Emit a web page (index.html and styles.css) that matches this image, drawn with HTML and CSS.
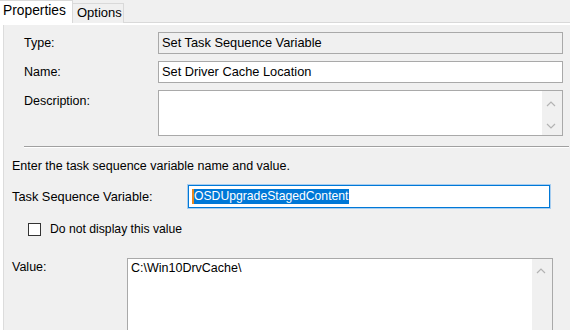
FILE: index.html
```html
<!DOCTYPE html>
<html>
<head>
<meta charset="utf-8">
<link rel="stylesheet" href="styles.css">
</head>
<body>
<div class="window">
  <div class="tabs">
    <div class="tab active">Properties</div>
    <div class="tab">Options</div>
  </div>
  <div class="page">
    <div class="content">
      <div class="top">
        <div class="row">
          <div class="label">Type:</div>
          <div class="box readonly">Set Task Sequence Variable</div>
        </div>
        <div class="row">
          <div class="label">Name:</div>
          <div class="box">Set Driver Cache Location</div>
        </div>
        <div class="row desc-row">
          <div class="label">Description:</div>
          <div class="box desc">
            <div class="text"></div>
            <div class="scroll">
              <svg width="10" height="6" viewBox="0 0 10 6"><polyline points="1,5 5,1 9,5" fill="none" stroke="#b3b3b3" stroke-width="1.2"/></svg>
              <svg width="10" height="6" viewBox="0 0 10 6"><polyline points="1,1 5,5 9,1" fill="none" stroke="#b3b3b3" stroke-width="1.2"/></svg>
            </div>
          </div>
        </div>
        <div class="sep"></div>
      </div>
      <div class="bottom">
        <div class="intro">Enter the task sequence variable name and value.</div>
        <div class="row tsv-row">
          <div class="label tsv-label">Task Sequence Variable:</div>
          <div class="box focus"><span class="caret"></span><span class="sel">OSDUpgradeStagedContent</span></div>
        </div>
        <div class="check-row">
          <span class="checkbox"></span>
          <span class="check-label">Do not display this value</span>
        </div>
        <div class="value-row">
          <div class="label value-label">Value:</div>
          <div class="box value">
            <div class="text">C:\Win10DrvCache\</div>
            <div class="scroll vscroll">
              <svg width="10" height="6" viewBox="0 0 10 6"><polyline points="1,5 5,1 9,5" fill="none" stroke="#b3b3b3" stroke-width="1.2"/></svg>
            </div>
          </div>
        </div>
      </div>
    </div>
  </div>
</div>
</body>
</html>
```

FILE: styles.css
```css
* { box-sizing: border-box; }
html, body {
  margin: 0;
  padding: 0;
  background: #f0f0f0;
}
body {
  font-family: "Liberation Sans", Arial, sans-serif;
  font-size: 12.5px;
  color: #000;
}
.window {
  width: 570px;
  height: 330px;
  overflow: hidden;
  position: relative;
}
.tabs {
  display: flex;
  align-items: flex-end;
  height: 23px;
  background: #f0f0f0;
}
.tab {
  height: 20px;
  padding: 0 4px;
  line-height: 18px;
  border: 1px solid #d9d9d9;
  border-bottom: none;
  background: #f0f0f0;
  font-size: 13px;
}
.tab.active {
  height: 23px;
  width: 73px;
  background: #fff;
  line-height: 20px;
  padding: 0 3px;
  border-left: none;
  position: relative;
  z-index: 1;
  font-size: 13.8px;
}
.tab:not(.active) {
  width: 51px;
  border-left: none;
}
.page {
  background: #fff;
  border-top: 1px solid #d9d9d9;
  margin-top: -1px;
  padding: 2px 0 0 3px;
  height: 308px;
}
.content {
  background: #f0f0f0;
  border-left: 1px solid #dcdcdc;
  height: 100%;
  width: 600px;
}
.top {
  padding: 7px 0 0 20px;
}
.row {
  display: flex;
  align-items: center;
  margin-bottom: 7px;
}
.label {
  width: 134px;
  flex: none;
}
.box {
  width: 405px;
  height: 22px;
  border: 1px solid #a9a9a9;
  background: #fff;
  padding: 0 3px;
  line-height: 20px;
  white-space: nowrap;
  overflow: hidden;
  font-size: 12.8px;
}
.box.readonly {
  background: #f0f0f0;
}
.desc-row {
  align-items: flex-start;
  margin-bottom: 0;
}
.desc-row .label {
  padding-top: 4px;
}
.box.desc {
  height: 46px;
  display: flex;
  padding: 0;
}
.box .text {
  flex: 1;
  padding: 0 3px;
}
.scroll {
  width: 20px;
  flex: none;
  background: #f0f0f0;
  display: flex;
  flex-direction: column;
  align-items: center;
  justify-content: space-between;
  padding: 10px 2px 6px 0;
}
.scroll svg { display: block; }
.sep {
  margin-top: 10px;
  height: 1px;
  width: 545px;
  background: #a0a0a0;
  border-bottom: 1px solid #fff;
  box-sizing: content-box;
}
.bottom {
  padding: 11px 0 0 8px;
}
.intro {
  line-height: 15px;
  height: 15px;
}
.tsv-row {
  margin-top: 11px;
  margin-bottom: 0;
}
.tsv-label {
  width: 176px;
  font-size: 12.8px;
}
.box.focus {
  width: 362px;
  height: 23px;
  border: 1px solid #0078d7;
  box-shadow: 0 0 0 1px #a6cdf0;
  padding: 2px 3px;
  display: flex;
  align-items: center;
}
.caret {
  width: 2px;
  height: 15px;
  background: #e8871e;
  flex: none;
}
.sel {
  background: #0078d7;
  color: #fff;
  line-height: 15px;
  height: 15px;
  padding-right: 1px;
  font-size: 12.2px;
}
.check-row {
  display: flex;
  align-items: center;
  margin-top: 14px;
  padding-left: 16px;
  height: 14px;
}
.checkbox {
  width: 13px;
  height: 13px;
  border: 1px solid #333;
  background: #fff;
  flex: none;
}
.check-label {
  margin-left: 9px;
  font-size: 12.2px;
}
.value-row {
  display: flex;
  align-items: flex-start;
  margin-top: 22px;
}
.value-label {
  width: 115px;
  padding-top: 2px;
}
.box.value {
  width: 426px;
  height: 90px;
  display: flex;
  padding: 0;
  border-color: #a9a9a9;
  line-height: 18px;
  font-size: 12.5px;
}
.vscroll {
  justify-content: flex-start;
  padding-top: 9px;
}
```
